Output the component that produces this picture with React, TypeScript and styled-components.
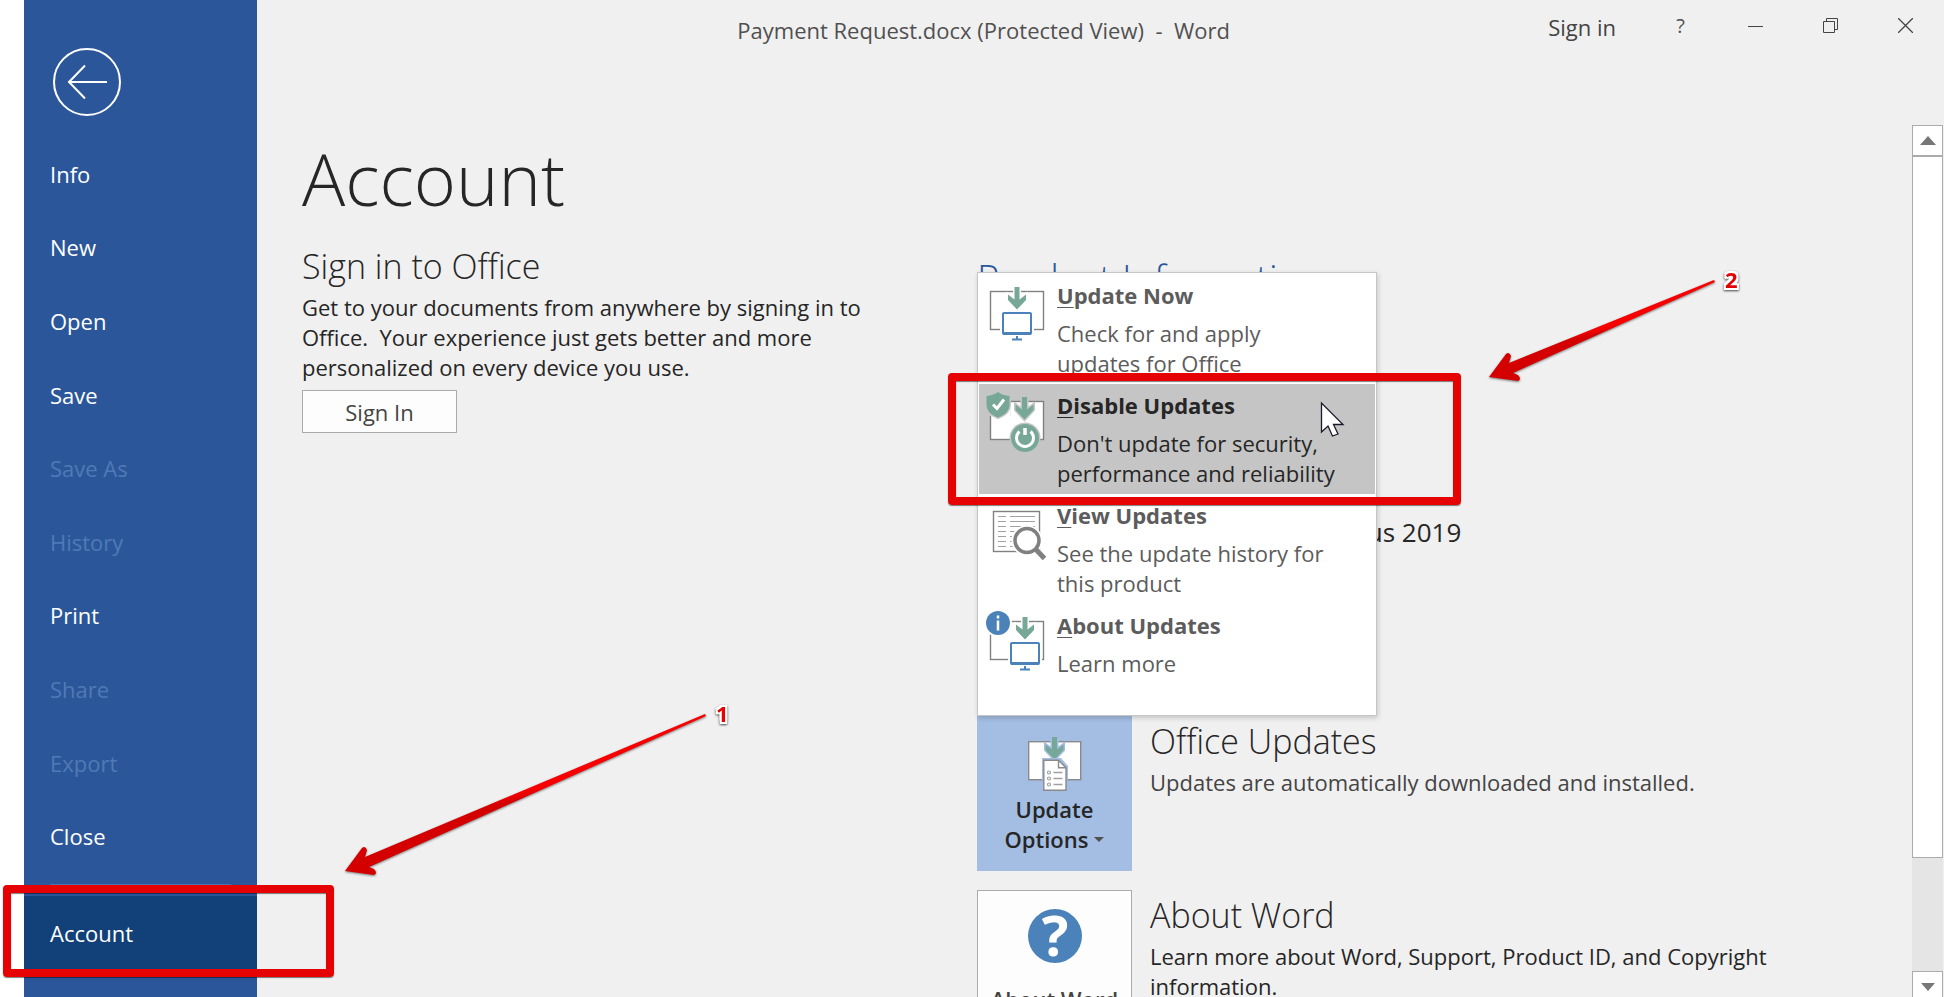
import React from 'react';
import styled, { createGlobalStyle } from 'styled-components';

const GlobalStyle = createGlobalStyle`
  * { box-sizing: border-box; }
  body {
    margin: 0;
    background: #ffffff;
    color: #262626;
    font-family: 'Open Sans', 'Noto Sans', sans-serif;
    font-size: 22px;
    line-height: 30px;
  }
  h1, h2, p, ul { margin: 0; padding: 0; font-weight: 400; }
  button { font: inherit; color: inherit; margin: 0; padding: 0; border: 0; background: none; }
`;

const RED = '#e60202';
const GREEN = '#76a797';
const BLUE = '#4c82ba';

const Window = styled.div`
  display: flex;
  height: 100vh;
  padding-left: 24px;
  overflow: hidden;
`;

const Sidebar = styled.nav`
  position: relative;
  z-index: 2;
  flex: 0 0 233px;
  background: #2b579a;
  color: #ffffff;
`;

const BackButton = styled.button`
  display: block;
  width: 68px;
  height: 68px;
  margin: 48px 0 21px 29px;
`;

const NavList = styled.ul`
  display: grid;
  grid-auto-rows: 1fr;
  height: 736px;
  list-style: none;
`;

const NavButton = styled.button`
  display: block;
  width: 100%;
  height: 100%;
  padding-left: 26px;
  text-align: left;
  color: #ffffff;
  &:disabled { color: #4f7ab5; }
`;

const NavDivider = styled.div`
  height: 1px;
  margin: 11px 26px;
  background: #4a73b0;
`;

const SelectedItem = styled.div`
  position: relative;
  height: 74px;
  background: #124078;
`;

const Main = styled.div`
  flex: 1;
  min-width: 0;
  display: flex;
  flex-direction: column;
  background: #f0f0f0;
`;

const TitleBar = styled.header`
  flex: 0 0 125px;
  display: flex;
  align-items: flex-start;
  padding-right: 1px;
  color: #505050;
`;

const DocumentTitle = styled.div`
  flex: 1;
  padding: 15px 0 0 162px;
  text-align: center;
  white-space: pre;
`;

const SignInLink = styled.button`
  margin: 12px 27px 0 0;
  color: #444444;
`;

const CaptionButton = styled.button`
  display: flex;
  align-items: center;
  justify-content: center;
  width: 75px;
  height: 51px;
  font-size: 20px;
`;

const Body = styled.div`
  flex: 1;
  min-height: 0;
  display: flex;
`;

const Content = styled.main`
  flex: 1;
  min-width: 0;
  padding: 2px 0 0 45px;
`;

const PageTitle = styled.h1`
  && { font-weight: 300; }
  font-size: 72px;
  line-height: 102px;
`;

const Columns = styled.div`
  display: grid;
  grid-template-columns: minmax(0, 675px) minmax(0, 1fr);
  padding-top: 13px;
`;

const Heading = styled.h2<{ $accent?: boolean }>`
  && { font-weight: 300; }
  font-size: ${(p) => (p.$accent ? 38 : 34)}px;
  line-height: 48px;
  color: ${(p) => (p.$accent ? '#2b579a' : '#262626')};
`;

const Text = styled.p<{ $width?: number; $muted?: boolean }>`
  margin-top: 2px;
  max-width: ${(p) => (p.$width ? `${p.$width}px` : 'none')};
  color: ${(p) => (p.$muted ? '#444444' : '#262626')};
`;

const SignInButton = styled.button`
  width: 155px;
  height: 43px;
  margin-top: 8px;
  border: 1px solid #ababab;
  background: #fdfdfd;
  color: #444444;
`;

const ProductColumn = styled.section`
  padding-top: 12px;
`;

const ProductName = styled.p`
  margin-top: 212px;
  padding-left: 12px;
  font-size: 26px;
  line-height: 36px;
`;

const ProductRow = styled.div<{ $first?: boolean }>`
  display: flex;
  gap: 18px;
  margin-top: ${(p) => (p.$first ? 166 : 19)}px;
`;

const RowText = styled.div`
  padding-top: 1px;
`;

const TileAnchor = styled.div`
  position: relative;
  flex: 0 0 155px;
`;

const Tile = styled.button<{ $active?: boolean }>`
  display: flex;
  flex-direction: column;
  align-items: center;
  gap: ${(p) => (p.$active ? 3 : 21)}px;
  width: 155px;
  height: 155px;
  padding-top: ${(p) => (p.$active ? 21 : 18)}px;
  border: ${(p) => (p.$active ? '0' : '1px solid #ababab')};
  background: ${(p) => (p.$active ? '#a3bde3' : '#fdfdfd')};
  color: ${(p) => (p.$active ? '#262626' : '#444444')};
  font-weight: 600;
`;

const Caret = styled.span`
  display: inline-block;
  margin-left: 6px;
  vertical-align: 6px;
  border: 5px solid transparent;
  border-top-color: #505050;
  border-bottom: 0;
`;

const Menu = styled.div`
  position: absolute;
  z-index: 3;
  left: 0;
  bottom: 100%;
  width: 400px;
  padding: 1px;
  border: 1px solid #c6c6c6;
  background: #ffffff;
  box-shadow: 1px 2px 5px rgba(0, 0, 0, 0.18);
`;

const MenuEntry = styled.div<{ $raised?: boolean }>`
  position: relative;
  z-index: ${(p) => (p.$raised ? 1 : 0)};
`;

const MenuItem = styled.button<{ $hover?: boolean }>`
  display: flex;
  width: 100%;
  height: 110px;
  text-align: left;
  background: ${(p) => (p.$hover ? '#c5c5c5' : '#ffffff')};
  color: ${(p) => (p.$hover ? '#262626' : '#5c5c5c')};
`;

const MenuIcon = styled.svg`
  flex: 0 0 78px;
  height: 76px;
`;

const MenuText = styled.span`
  display: flex;
  flex-direction: column;
  gap: 8px;
  max-width: 290px;
  padding-top: 6px;
`;

const MenuTitle = styled.span`
  font-weight: 700;
  u { text-decoration-thickness: 1px; text-underline-offset: 3px; text-decoration-skip-ink: none; }
`;

const MenuDescription = styled.span<{ $width?: number }>`
  max-width: ${(p) => (p.$width ? `${p.$width}px` : 'none')};
`;

const Pointer = styled.svg`
  position: absolute;
  left: 341px;
  top: 17px;
`;

const Scrollbar = styled.div`
  flex: 0 0 31px;
  display: flex;
  flex-direction: column;
  margin: 0 1px -5px 0;
  background: #e5e5e5;
`;

const ScrollButton = styled.button`
  display: flex;
  align-items: center;
  justify-content: center;
  flex: 0 0 31px;
  border: 1px solid #ababab;
  background: #ffffff;
`;

const ScrollThumb = styled.div`
  flex: 0 0 80%;
  margin-bottom: auto;
  border: 1px solid #ababab;
  background: #ffffff;
`;

const Marker = styled.div<{ $t: number; $r: number; $b: number; $l: number }>`
  position: absolute;
  top: ${(p) => -p.$t}px;
  right: ${(p) => -p.$r}px;
  bottom: ${(p) => -p.$b}px;
  left: ${(p) => -p.$l}px;
  border: 8px solid ${RED};
  border-radius: 4px;
  box-shadow: 0 1px 1px rgba(0, 0, 0, 0.5), inset 0 1px 1px rgba(0, 0, 0, 0.5);
  pointer-events: none;
`;

const Callout = styled.div<{ $left: number; $top: number }>`
  position: absolute;
  left: ${(p) => p.$left}px;
  top: ${(p) => p.$top}px;
  display: flex;
  align-items: flex-start;
  gap: 10px;
  pointer-events: none;
  svg { overflow: visible; filter: drop-shadow(0 1px 1px rgba(0, 0, 0, 0.5)); }
`;

const CalloutNumber = styled.span`
  margin-top: -16px;
  color: ${RED};
  font-weight: 700;
  text-shadow: 2px 0 #fff, -2px 0 #fff, 0 2px #fff, 0 -2px #fff, 2px 2px #fff, -2px 2px #fff, 2px -2px #fff,
    -2px -2px #fff;
  filter: drop-shadow(0 1px 1px rgba(0, 0, 0, 0.7));
`;

const DownArrow = ({ x, y = 13, halo = '#ffffff' }: { x: number; y?: number; halo?: string }) => (
  <path
    transform={`translate(${x} ${y})`}
    d="M-2.5 0h5v12.5L9 7.5V13L0 22.5L-9 13V7.5L-2.5 12.5z"
    fill={GREEN}
    stroke={halo}
    strokeWidth="3"
    paintOrder="stroke"
  />
);

const Screen = ({ x }: { x: number }) => (
  <g transform={`translate(${x} 38)`}>
    <path d="M-2-2h34v27h-34z" fill="#fff" />
    <rect x="1" y="1" width="28" height="21" rx="1" fill="#fff" stroke={BLUE} strokeWidth="2" />
    <path d="M1 21.5h28" stroke={BLUE} strokeWidth="3" />
    <path d="M15 24v4M10 27.5h10" stroke={BLUE} strokeWidth="2" fill="none" />
  </g>
);

const Panel = () => (
  <rect x="11.5" y="17.5" width="53" height="38" fill="#fff" stroke="#808080" strokeWidth="1.4" />
);

const UpdateNowIcon = () => (
  <MenuIcon viewBox="0 0 78 76" aria-hidden="true">
    <Panel />
    <DownArrow x={38} />
    <Screen x={23} />
  </MenuIcon>
);

const DisableIcon = () => (
  <MenuIcon viewBox="0 0 78 76" aria-hidden="true">
    <Panel />
    <path d="M6 7h25.5v25H6z" fill="#c5c5c5" />
    <path d="M12.2 18.2h19.300v14H12.2z" fill="#fff" />
    <path
      d="M19 8c3.500 2.500 7 3.700 11.500 4v8c0 7-4.500 11-11.500 13.500C12 31 7.500 27 7.500 20v-8C12 11.700 15.500 10.500 19 8z"
      fill={GREEN}
      stroke="#c5c5c5"
      strokeWidth="3"
      paintOrder="stroke"
    />
    <DownArrow x={45.5} halo="#c5c5c5" />
    <path d="M14 20.500l4 4 7-9" fill="none" stroke="#fff" strokeWidth="3" />
    <circle cx="46" cy="54" r="15.500" fill="#c5c5c5" />
    <circle cx="46" cy="54" r="14" fill={GREEN} />
    <path d="M40.500 47.500a8.500 8.500 0 1 0 11 0" fill="none" stroke="#fff" strokeWidth="3" />
    <path d="M46 44v7" stroke="#fff" strokeWidth="3.500" />
  </MenuIcon>
);

const ViewIcon = () => (
  <MenuIcon viewBox="0 0 78 76" aria-hidden="true">
    <rect x="14.500" y="17.500" width="46" height="40" fill="#fff" stroke="#808080" strokeWidth="1.400" />
    <path
      d="M19 22.500h8M19 27.500h8M19 32.500h8M19 37.500h8M19 42.500h8M19 47.500h8M19 52.500h8M31 22.500h25M31 27.500h25M31 32.500h25M31 37.500h10M31 42.500h5M31 47.500h5M31 52.500h5"
      stroke="#a0a0a0"
      strokeWidth="1.200"
    />
    <circle cx="48" cy="46.500" r="15.500" fill="#fff" />
    <path d="M55 55l9 9" stroke="#fff" strokeWidth="8" />
    <circle cx="48" cy="46.500" r="12" fill="#fff" stroke="#808080" strokeWidth="3.500" />
    <path d="M56.500 55l9 9.500" stroke="#808080" strokeWidth="5" />
  </MenuIcon>
);

const AboutUpdatesIcon = () => (
  <MenuIcon viewBox="0 0 78 76" aria-hidden="true">
    <Panel />
    <circle cx="19" cy="19" r="14" fill="#fff" />
    <circle cx="19" cy="19" r="12" fill={BLUE} />
    <path d="M19 11.500v3M19 16.500v10" stroke="#fff" strokeWidth="2.500" />
    <DownArrow x={46} />
    <Screen x={31} />
  </MenuIcon>
);

const UpdateOptionsIcon = () => (
  <svg width="54" height="54" viewBox="0 0 54 54" aria-hidden="true">
    <rect x="0.700" y="4.700" width="52" height="38" fill="#fff" stroke="#8a8a8a" strokeWidth="1.400" />
    <DownArrow x={26.5} y={0} halo="#a3bde3" />
    <path d="M14 21h19l7 8v14H14z" fill="#a3bde3" />
    <path d="M15.800 23.200h14.700l7.500 7.500v22.500H15.800z" fill="#fff" stroke="#8a8a8a" strokeWidth="1.400" />
    <path d="M30.500 23.200v7.500h7.500" fill="none" stroke="#8a8a8a" strokeWidth="1.400" />
    <path d="M25.500 35.500h9M25.500 41.500h9M25.500 47.500h9" stroke="#a0a0a0" strokeWidth="1.300" />
    <g fill="none" stroke="#a0a0a0" strokeWidth="1.200">
      <circle cx="21" cy="35.500" r="1.500" />
      <circle cx="21" cy="41.500" r="1.500" />
      <circle cx="21" cy="47.500" r="1.500" />
    </g>
  </svg>
);

const HelpIcon = () => (
  <svg width="54" height="54" viewBox="0 0 54 54" aria-hidden="true">
    <circle cx="27" cy="27" r="27" fill={BLUE} />
    <text x="27" y="47" textAnchor="middle" fontSize="56" fontWeight="700" fill="#fff">?</text>
  </svg>
);

const CalloutArrow = ({ width, height, drop }: { width: number; height: number; drop: number }) => (
  <svg width={width} height={height} aria-hidden="true">
    <defs>
      <linearGradient id={`shaft${drop}`} x1="0.450" y1="0.400" x2="0.550" y2="0.600">
        <stop offset="0.400" stopColor="#f80000" />
        <stop offset="0.600" stopColor="#d40000" />
      </linearGradient>
    </defs>
    <path
      d={`M0 ${drop}L17 ${drop - 23}Q20 ${drop - 26} 22 ${drop - 21}L20 ${drop - 14}L${width - 1} 0L${width} 2L24 ${drop - 4}L29 ${drop - 2}Q33 ${drop + 2} 29 ${drop + 4}Z`}
      fill={`url(#shaft${drop})`}
    />
  </svg>
);

const navItems: { label: string; disabled?: boolean }[] = [
  { label: 'Info' },
  { label: 'New' },
  { label: 'Open' },
  { label: 'Save' },
  { label: 'Save As', disabled: true },
  { label: 'History', disabled: true },
  { label: 'Print' },
  { label: 'Share', disabled: true },
  { label: 'Export', disabled: true },
  { label: 'Close' },
];

const menuItems = [
  { title: 'Update Now', text: 'Check for and apply updates for Office', Icon: UpdateNowIcon, width: 220 },
  {
    title: 'Disable Updates',
    text: "Don't update for security, performance and reliability",
    Icon: DisableIcon,
    hover: true,
  },
  { title: 'View Updates', text: 'See the update history for this product', Icon: ViewIcon },
  { title: 'About Updates', text: 'Learn more', Icon: AboutUpdatesIcon },
];

export default function App() {
  return (
    <>
      <GlobalStyle />
      <Window>
        <Sidebar>
          <BackButton aria-label="Back">
            <svg width="68" height="68" viewBox="0 0 68 68" fill="none" stroke="#fff" strokeWidth="2">
              <circle cx="34" cy="34" r="33" />
              <path d="M54 34H16M32 17.500L16 34l16 16.500" />
            </svg>
          </BackButton>
          <NavList>
            {navItems.map((item) => (
              <li key={item.label}>
                <NavButton disabled={item.disabled}>{item.label}</NavButton>
              </li>
            ))}
          </NavList>
          <NavDivider />
          <SelectedItem>
            <NavButton aria-current="page">Account</NavButton>
            <Marker $t={11} $r={77} $b={7} $l={21} />
            <Callout $left={321} $top={-182}>
              <CalloutArrow width={361} height={164} drop={157} />
              <CalloutNumber>1</CalloutNumber>
            </Callout>
          </SelectedItem>
        </Sidebar>

        <Main>
          <TitleBar>
            <DocumentTitle>{'Payment Request.docx (Protected View)  -  Word'}</DocumentTitle>
            <SignInLink>Sign in</SignInLink>
            <CaptionButton aria-label="Help">?</CaptionButton>
            <CaptionButton aria-label="Minimize">
              <svg width="15" height="15" stroke="#444"><path d="M0 8.500h15" /></svg>
            </CaptionButton>
            <CaptionButton aria-label="Restore">
              <svg width="15" height="15" stroke="#444" fill="none">
                <path d="M0.500 3.500h11v11h-11zM3.500 3.500v-3h11v11h-3" />
              </svg>
            </CaptionButton>
            <CaptionButton aria-label="Close window">
              <svg width="15" height="15" stroke="#444" strokeWidth="1.300"><path d="M0 0l15 15M15 0L0 15" /></svg>
            </CaptionButton>
          </TitleBar>

          <Body>
            <Content>
              <PageTitle>Account</PageTitle>
              <Columns>
                <section>
                  <Heading>Sign in to Office</Heading>
                  <Text $width={575}>
                    Get to your documents from anywhere by signing in to Office.&nbsp; Your experience just gets better
                    and more personalized on every device you use.
                  </Text>
                  <SignInButton>Sign In</SignInButton>
                </section>

                <ProductColumn>
                  <Heading $accent>Product Information</Heading>
                  <ProductName>Microsoft Office Professional Plus 2019</ProductName>

                  <ProductRow $first>
                    <TileAnchor>
                      <Tile $active aria-haspopup="menu" aria-expanded="true">
                        <UpdateOptionsIcon />
                        <span>
                          Update
                          <br />
                          Options
                          <Caret />
                        </span>
                      </Tile>
                      <Menu role="menu">
                        {menuItems.map(({ title, text, Icon, hover, width }) => (
                          <MenuEntry key={title} $raised={hover}>
                            <MenuItem role="menuitem" $hover={hover}>
                              <Icon />
                              <MenuText>
                                <MenuTitle>
                                  <u>{title[0]}</u>
                                  {title.slice(1)}
                                </MenuTitle>
                                <MenuDescription $width={width}>{text}</MenuDescription>
                              </MenuText>
                            </MenuItem>
                            {hover && (
                              <>
                                <Pointer width="25" height="37" viewBox="0 0 25 37" aria-hidden="true">
                                  <path
                                    d="M1.500 2v29l6.500-6 4.500 10 5.500-2-4.500-9.500h9.500z"
                                    fill="#fff"
                                    stroke="#1a1a2a"
                                    strokeWidth="1.300"
                                  />
                                </Pointer>
                                <Marker $t={11} $r={86} $b={11} $l={31} />
                                <Callout $left={510} $top={-104}>
                                  <CalloutArrow width={226} height={104} drop={97} />
                                  <CalloutNumber>2</CalloutNumber>
                                </Callout>
                              </>
                            )}
                          </MenuEntry>
                        ))}
                      </Menu>
                    </TileAnchor>
                    <RowText>
                      <Heading>Office Updates</Heading>
                      <Text $muted>Updates are automatically downloaded and installed.</Text>
                    </RowText>
                  </ProductRow>

                  <ProductRow>
                    <TileAnchor>
                      <Tile>
                        <HelpIcon />
                        <span>About Word</span>
                      </Tile>
                    </TileAnchor>
                    <RowText>
                      <Heading>About Word</Heading>
                      <Text $width={640}>
                        Learn more about Word, Support, Product ID, and Copyright information.
                      </Text>
                    </RowText>
                  </ProductRow>
                </ProductColumn>
              </Columns>
            </Content>

            <Scrollbar>
              <ScrollButton aria-label="Scroll up">
                <svg width="16" height="9" fill="#777"><path d="M0 9L8 0l8 9z" /></svg>
              </ScrollButton>
              <ScrollThumb />
              <ScrollButton aria-label="Scroll down">
                <svg width="14" height="8" fill="#777"><path d="M0 0h14L7 8z" /></svg>
              </ScrollButton>
            </Scrollbar>
          </Body>
        </Main>
      </Window>
    </>
  );
}
